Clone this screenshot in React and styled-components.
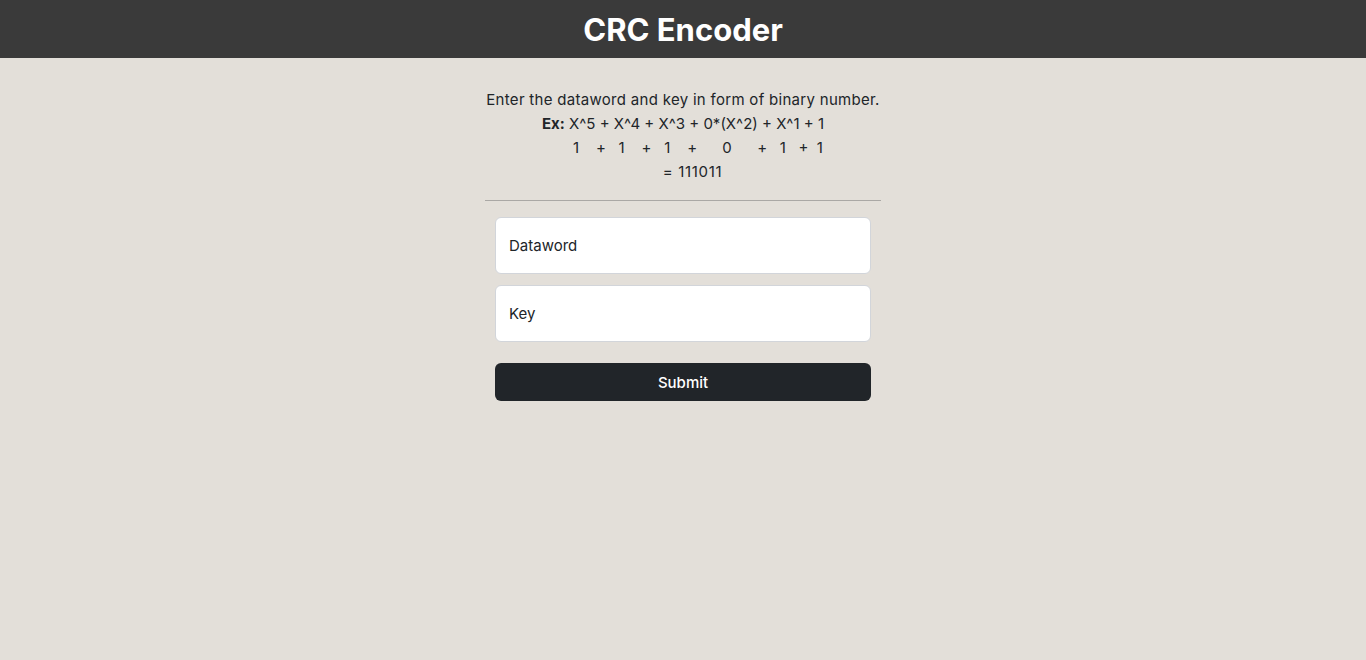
import React from "react";
import styled, { createGlobalStyle } from "styled-components";

const Global = createGlobalStyle`
  html, body { margin: 0; padding: 0; }
  body {
    background: #e3dfd9;
    font-family: Inter, "Open Sans", sans-serif;
    color: #212529;
  }
`;

const Header = styled.header`
  height: 58px;
  background: #3a3a3a;
  display: flex;
  align-items: center;
  justify-content: center;
`;

const Title = styled.h1`
  margin: 0;
  color: #ffffff;
  font-size: 31px;
  font-weight: 700;
`;

const Main = styled.main`
  width: 396px;
  margin: 0 auto;
  padding-top: 30px;
`;

const Info = styled.div`
  text-align: center;
  font-size: 15px;
  line-height: 24px;
`;

const Line = styled.div`
  white-space: pre;
  letter-spacing: ${(p) => p.$ls || 0}px;
  padding-left: ${(p) => p.$pl || 0}px;
`;

const Rule = styled.hr`
  margin: 16px 0 16px;
  border: 0;
  border-top: 1px solid #aaa8a5;
`;

const Form = styled.form`
  padding: 0 10px;
  display: flex;
  flex-direction: column;
`;

const Input = styled.input`
  box-sizing: border-box;
  height: 57px;
  width: 100%;
  border: 1px solid #d2d5da;
  border-radius: 6px;
  background: #fff;
  padding: 0 13px;
  font-family: inherit;
  font-size: 15px;
  color: #212529;
  margin-bottom: ${(p) => p.$mb}px;
  outline: none;
  &::placeholder { color: #212529; }
`;

const Button = styled.button`
  height: 38px;
  border: 0;
  border-radius: 6px;
  background: #212529;
  color: #fff;
  font-family: inherit;
  font-size: 15px;
  font-weight: 500;
  cursor: pointer;
`;

export default function App() {
  return (
    <>
      <Global />
      <Header>
        <Title>CRC Encoder</Title>
      </Header>
      <Main>
        <Info>
          <Line $ls={0.3}>Enter the dataword and key in form of binary number.</Line>
          <Line>
            <b>Ex:</b> X^5 + X^4 + X^3 + 0*(X^2) + X^1 + 1
          </Line>
          <Line $pl={30}>{"1    +   1    +   1    +      0      +   1   +  1"}</Line>
          <Line $ls={0.7} $pl={19}>= 111011</Line>
        </Info>
        <Rule />
        <Form onSubmit={(e) => e.preventDefault()}>
          <Input placeholder="Dataword" $mb={11} />
          <Input placeholder="Key" $mb={21} />
          <Button type="submit">Submit</Button>
        </Form>
      </Main>
    </>
  );
}
